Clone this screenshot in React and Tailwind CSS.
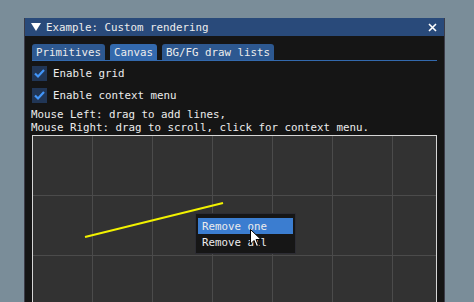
import React from "react";

const mono = { fontFamily: '"DejaVu Sans Mono", "Liberation Mono", monospace' };

function CheckRow({ label }) {
  return (
    <div className="flex items-center h-[15px]">
      <div className="w-[15px] h-[15px] bg-[#213656] flex items-center justify-center">
        <svg viewBox="0 0 15 15" className="w-[15px] h-[15px]">
          <path d="M3 7.5 L6 10.5 L12 4" fill="none" stroke="#4296fa" strokeWidth="2.2" />
        </svg>
      </div>
      <span className="ml-[6px]">{label}</span>
    </div>
  );
}

function Tab({ label, active }) {
  return (
    <div
      className={
        "h-[16px] px-[4px] rounded-t-[3px] flex items-center " +
        (active ? "bg-[#3369ad]" : "bg-[#2d5890]")
      }
    >
      {label}
    </div>
  );
}

function Canvas() {
  const vlines = [60, 120, 180, 240, 300, 360];
  const hlines = [60, 120];
  return (
    <div className="relative mt-[1px] w-[405px] h-[170px] bg-[#323232] border border-[#d6d6d6] overflow-hidden">
      <svg className="absolute left-0 top-0" width="405" height="170">
        {vlines.map((x) => (
          <line key={"v" + x} x1={x - 0.5} y1="0" x2={x - 0.5} y2="170" stroke="#4b4b4b" strokeWidth="1" />
        ))}
        {hlines.map((y) => (
          <line key={"h" + y} x1="0" y1={y - 0.5} x2="405" y2={y - 0.5} stroke="#4b4b4b" strokeWidth="1" />
        ))}
        <line x1="52" y1="101" x2="190" y2="67" stroke="#f2f200" strokeWidth="2" />
      </svg>

      {/* context menu */}
      <div className="absolute left-[162px] top-[77px] w-[101px] bg-[#161616] border border-[#2c2c33] pt-[4px] pb-[3px] px-[2px]">
        <div className="h-[16px] bg-[#3b7dd0] pl-[4px] flex items-center">Remove one</div>
        <div className="h-[16px] pl-[4px] flex items-center">Remove all</div>
      </div>

      {/* mouse cursor */}
      <svg className="absolute left-[217px] top-[93px]" width="12" height="19" viewBox="0 0 12 19">
        <path
          d="M0.5 0.5 L0.5 15 L4 11.5 L6.5 17.5 L8.5 16.5 L6 10.5 L11 10.5 Z"
          fill="#ffffff"
          stroke="#000000"
          strokeWidth="1"
          strokeLinejoin="round"
        />
      </svg>
    </div>
  );
}

export default function App() {
  return (
    <div
      className="w-[474px] h-[302px] bg-[#7a8d99] pl-[24px] pt-[18px] overflow-hidden text-[10.8px] leading-[13px] text-[#ececec]"
      style={mono}
    >
      <div className="w-[421px] h-[290px] flex flex-col border-x border-[#3c3c48]">
        {/* title bar */}
        <div className="h-[18px] bg-[#294a7a] flex items-center pl-[6px] pr-[7px]">
          <svg width="10" height="8" viewBox="0 0 10 8">
            <path d="M0 0 L10 0 L5 8 Z" fill="#ffffff" />
          </svg>
          <span className="ml-[5px] flex-1">Example: Custom rendering</span>
          <svg width="9" height="9" viewBox="0 0 9 9">
            <path d="M1 1 L8 8 M8 1 L1 8" stroke="#ffffff" strokeWidth="1.6" />
          </svg>
        </div>

        {/* body */}
        <div className="flex-1 bg-[#151515] px-[7px] pt-[8px]">
          <div className="flex gap-[5px] border-b border-[#3369ad]">
            <Tab label="Primitives" />
            <Tab label="Canvas" active />
            <Tab label="BG/FG draw lists" />
          </div>

          <div className="mt-[5px] flex flex-col gap-[7px]">
            <CheckRow label="Enable grid" />
            <CheckRow label="Enable context menu" />
          </div>

          <div className="mt-[5px] -ml-[1px]">
            <div>Mouse Left: drag to add lines,</div>
            <div>Mouse Right: drag to scroll, click for context menu.</div>
          </div>

          <Canvas />
        </div>
      </div>
    </div>
  );
}
